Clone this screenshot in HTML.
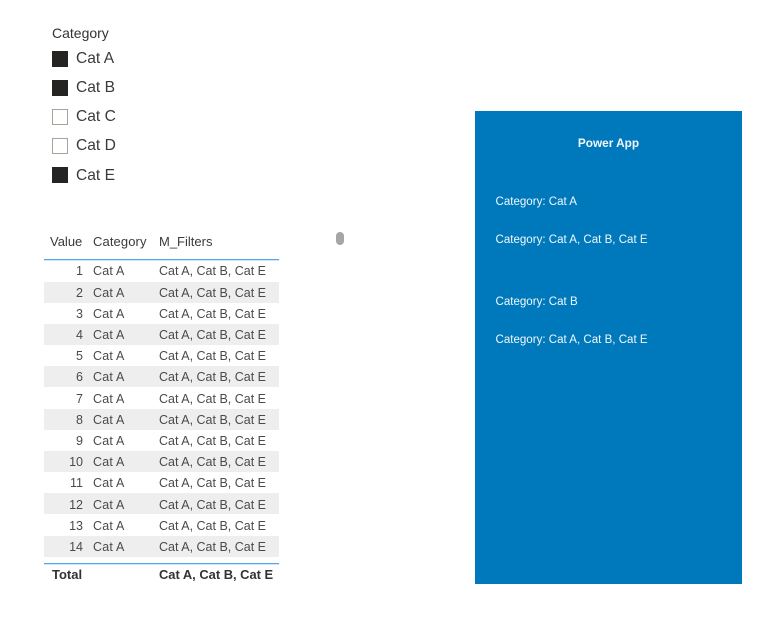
<!DOCTYPE html>
<html><head><meta charset="utf-8"><style>
html,body{margin:0;padding:0;background:#fff}
body{position:relative;width:768px;height:620px;overflow:hidden;font-family:"Liberation Sans",sans-serif}
.t{position:absolute;white-space:nowrap;line-height:18px;height:18px}
.s{font-size:15.6px;color:#3a3a3a;left:76px}
.b{position:absolute;left:52px;width:16px;height:16px;box-sizing:border-box;background:#252423}
.o{background:#fff;border:1px solid #a8a29a}
.h{font-size:13px;color:#3a3a3a;top:233px}
.c{font-size:12.5px;color:#4a4a4a}
.n{left:43px;width:40px;text-align:right}
.a{left:93px;letter-spacing:.2px}
.m{left:159px}
.r{position:absolute;left:44px;width:235px;background:#eee;height:21px}
.w{color:#f2f8fc;font-size:11.55px;left:495.5px}
.l{position:absolute;left:44px;width:235px;height:2px;background:linear-gradient(#5aa0e6 0 50%,#d5e6f7 50% 100%)}
</style></head><body>
<div class="t" style="left:52px;top:24px;font-size:14px;color:#333">Category</div>
<div class="b" style="top:51px"></div><div class="t s" style="top:50px">Cat A</div>
<div class="b" style="top:80px"></div><div class="t s" style="top:79px">Cat B</div>
<div class="b o" style="top:109px"></div><div class="t s" style="top:108px">Cat C</div>
<div class="b o" style="top:138px"></div><div class="t s" style="top:137px">Cat D</div>
<div class="b" style="top:167px"></div><div class="t s" style="top:167px">Cat E</div>

<div class="t h" style="left:50px">Value</div>
<div class="t h" style="left:93px;letter-spacing:.1px">Category</div>
<div class="t h" style="left:159px">M_Filters</div>
<div class="l" style="top:259px"></div>

<div class="r" style="top:282px"></div>
<div class="r" style="top:324px"></div>
<div class="r" style="top:366px"></div>
<div class="r" style="top:409px"></div>
<div class="r" style="top:451px"></div>
<div class="r" style="top:493px"></div>
<div class="r" style="top:536px"></div>

<div class="t c n" style="top:262px">1</div><div class="t c a" style="top:262px">Cat A</div><div class="t c m" style="top:262px">Cat A, Cat B, Cat E</div>
<div class="t c n" style="top:284px">2</div><div class="t c a" style="top:284px">Cat A</div><div class="t c m" style="top:284px">Cat A, Cat B, Cat E</div>
<div class="t c n" style="top:305px">3</div><div class="t c a" style="top:305px">Cat A</div><div class="t c m" style="top:305px">Cat A, Cat B, Cat E</div>
<div class="t c n" style="top:326px">4</div><div class="t c a" style="top:326px">Cat A</div><div class="t c m" style="top:326px">Cat A, Cat B, Cat E</div>
<div class="t c n" style="top:347px">5</div><div class="t c a" style="top:347px">Cat A</div><div class="t c m" style="top:347px">Cat A, Cat B, Cat E</div>
<div class="t c n" style="top:368px">6</div><div class="t c a" style="top:368px">Cat A</div><div class="t c m" style="top:368px">Cat A, Cat B, Cat E</div>
<div class="t c n" style="top:390px">7</div><div class="t c a" style="top:390px">Cat A</div><div class="t c m" style="top:390px">Cat A, Cat B, Cat E</div>
<div class="t c n" style="top:411px">8</div><div class="t c a" style="top:411px">Cat A</div><div class="t c m" style="top:411px">Cat A, Cat B, Cat E</div>
<div class="t c n" style="top:432px">9</div><div class="t c a" style="top:432px">Cat A</div><div class="t c m" style="top:432px">Cat A, Cat B, Cat E</div>
<div class="t c n" style="top:453px">10</div><div class="t c a" style="top:453px">Cat A</div><div class="t c m" style="top:453px">Cat A, Cat B, Cat E</div>
<div class="t c n" style="top:474px">11</div><div class="t c a" style="top:474px">Cat A</div><div class="t c m" style="top:474px">Cat A, Cat B, Cat E</div>
<div class="t c n" style="top:496px">12</div><div class="t c a" style="top:496px">Cat A</div><div class="t c m" style="top:496px">Cat A, Cat B, Cat E</div>
<div class="t c n" style="top:517px">13</div><div class="t c a" style="top:517px">Cat A</div><div class="t c m" style="top:517px">Cat A, Cat B, Cat E</div>
<div class="t c n" style="top:538px">14</div><div class="t c a" style="top:538px">Cat A</div><div class="t c m" style="top:538px">Cat A, Cat B, Cat E</div>

<div class="l" style="top:563px"></div>
<div class="t" style="left:52px;top:566px;font-size:13px;font-weight:bold;color:#333">Total</div>
<div class="t" style="left:159px;top:566px;font-size:12.9px;font-weight:bold;color:#333">Cat A, Cat B, Cat E</div>

<div style="position:absolute;left:336px;top:232px;width:8px;height:13px;border-radius:4px;background:#a6a6a6"></div>

<div style="position:absolute;left:475px;top:111px;width:267px;height:473px;background:#0079bc"></div>
<div class="t" style="left:475px;width:267px;text-align:center;top:134px;color:#f2f8fc;font-size:11.8px;font-weight:bold">Power App</div>
<div class="t w" style="top:193px">Category: Cat A</div>
<div class="t w" style="top:231px">Category: Cat A, Cat B, Cat E</div>
<div class="t w" style="top:293px">Category: Cat B</div>
<div class="t w" style="top:331px">Category: Cat A, Cat B, Cat E</div>
</body></html>
